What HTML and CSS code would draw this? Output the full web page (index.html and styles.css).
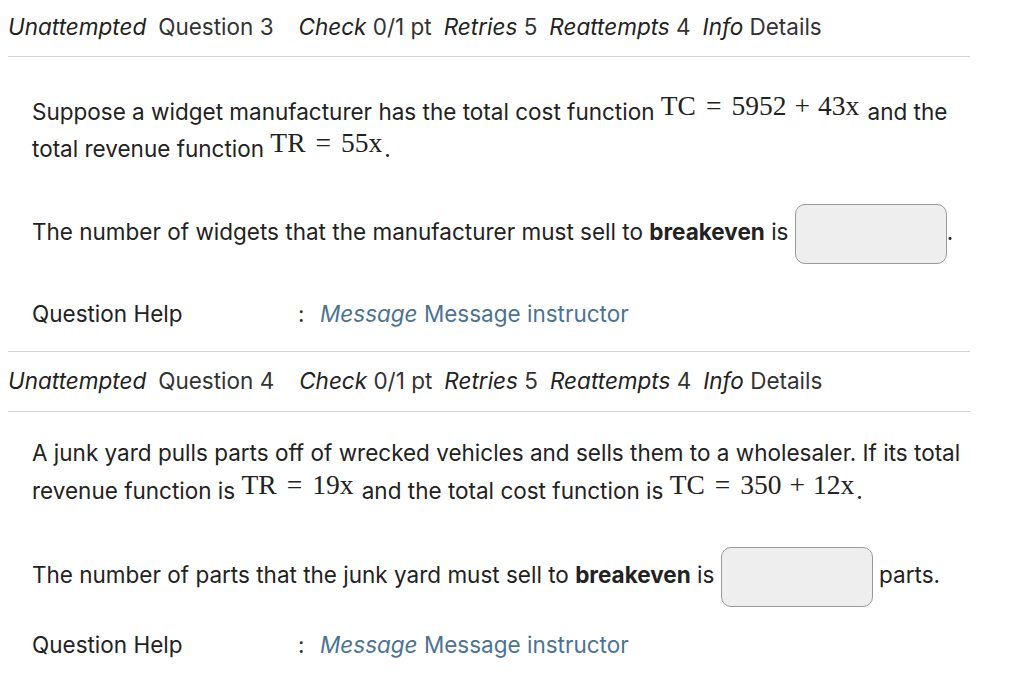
FILE: index.html
```html
<!DOCTYPE html>
<html>
<head>
<meta charset="utf-8">
<link rel="stylesheet" href="styles.css">
</head>
<body>
<div class="page">
  <section class="question">
    <div class="qhead">
      <i class="item">Unattempted</i>
      <span class="item">Question 3</span>
      <span class="item wide"><i>Check</i> 0/1 pt</span>
      <span class="item"><i>Retries</i> 5</span>
      <span class="item"><i>Reattempts</i> 4</span>
      <span class="item"><i>Info</i> Details</span>
    </div>
    <div class="qbody first">
      <p class="text">Suppose a widget manufacturer has the total cost function <span class="math">TC<span class="rel">=</span>5952<span class="bin">+</span>43x</span> and the total revenue function <span class="math">TR<span class="rel">=</span>55x</span>.</p>
      <p class="text answer">The number of widgets that the manufacturer must sell to <b>breakeven</b> is <span class="input"></span>.</p>
      <div class="help help-first">
        <span class="help-label">Question Help</span>
        <span class="help-colon">:</span>
        <a class="help-link"><i>Message</i> Message instructor</a>
      </div>
    </div>
  </section>
  <section class="question">
    <div class="qhead">
      <i class="item">Unattempted</i>
      <span class="item">Question 4</span>
      <span class="item wide"><i>Check</i> 0/1 pt</span>
      <span class="item"><i>Retries</i> 5</span>
      <span class="item"><i>Reattempts</i> 4</span>
      <span class="item"><i>Info</i> Details</span>
    </div>
    <div class="qbody second">
      <p class="text">A junk yard pulls parts off of wrecked vehicles and sells them to a wholesaler. If its total revenue function is <span class="math">TR<span class="rel">=</span>19x</span> and the total cost function is <span class="math">TC<span class="rel">=</span>350<span class="bin">+</span>12x</span>.</p>
      <p class="text answer">The number of parts that the junk yard must sell to <b>breakeven</b> is <span class="input"></span> parts.</p>
      <div class="help help-second">
        <span class="help-label">Question Help</span>
        <span class="help-colon">:</span>
        <a class="help-link"><i>Message</i> Message instructor</a>
      </div>
    </div>
  </section>
</div>
</body>
</html>
```

FILE: styles.css
```css
html, body {
  margin: 0;
  padding: 0;
  background: #ffffff;
}
body {
  padding: 8px;
  font-family: Inter, "Liberation Sans", sans-serif;
  font-size: 22.5px;
  color: #222222;
}
.page {
  width: 962px;
}
.qhead {
  display: flex;
  align-items: center;
  height: 38px;
  line-height: 38px;
  padding-bottom: 10px;
  border-bottom: 1px solid #d4d4d4;
  color: #333333;
  white-space: nowrap;
}
.question + .question .qhead {
  padding-top: 10px;
  padding-bottom: 11px;
}
.qhead i {
  color: #222222;
}
.item {
  margin-right: 12px;
}
.item.wide {
  margin-left: 13px;
}
.qbody {
  padding-left: 24px;
  border-bottom: 1px solid #d4d4d4;
}
.question:last-child .qbody {
  border-bottom: none;
}
.text {
  margin: 0;
  line-height: 37px;
}
.qbody.second .text {
  line-height: 38px;
}
.qbody.first .text:first-child {
  padding-top: 36px;
}
.qbody.second .text:first-child {
  padding-top: 22px;
}
.answer {
  margin-top: 37px;
}
.qbody.second .answer {
  margin-top: 37px;
}
.math {
  font-family: "Liberation Serif", "Times New Roman", serif;
  font-size: 27.5px;
  line-height: 0;
  vertical-align: 5px;
  margin-right: 2px;
}
.rel {
  margin: 0 10px;
}
.bin {
  margin: 0 8px;
}
.input {
  display: inline-block;
  box-sizing: border-box;
  width: 152px;
  height: 60px;
  border: 1px solid #9a9a9a;
  border-radius: 10px;
  background: #eeeeee;
  vertical-align: middle;
}
.help {
  display: flex;
  align-items: center;
  line-height: 37px;
}
.help-first {
  padding-top: 31px;
  padding-bottom: 19px;
}
.help-second {
  padding-top: 19px;
}
.help-label {
  width: 266px;
  color: #222222;
}
.help-colon {
  width: 22px;
  color: #333333;
}
.help-link {
  color: #4b7394;
}
```
